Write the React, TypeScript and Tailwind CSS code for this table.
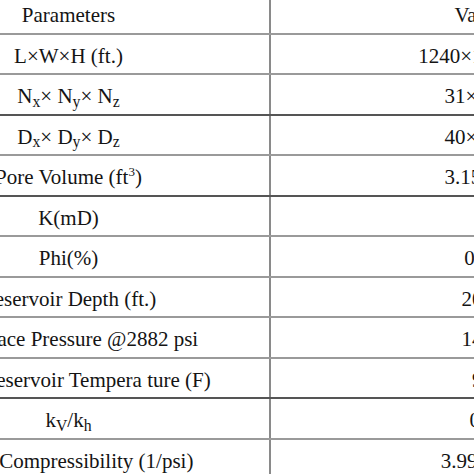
import type { ReactNode } from "react";

type Row = {
  label: ReactNode;
  value: ReactNode;
  dark?: boolean;
  shift?: string;
};

const rows: Row[] = [
  { label: "Parameters", value: "Values" },
  { label: "L×W×H (ft.)", value: "1240×1240×25" },
  {
    label: (
      <>
        N<sub>x</sub>× N<sub>y</sub>× N<sub>z</sub>
      </>
    ),
    value: "31×31×5",
    dark: true,
  },
  {
    label: (
      <>
        D<sub>x</sub>× D<sub>y</sub>× D<sub>z</sub>
      </>
    ),
    value: "40×40×5",
  },
  {
    label: (
      <>
        Pore Volume (ft<sup className="text-[13px] -top-[0.6em]">3</sup>)
      </>
    ),
    value: (
      <>
        3.15×10<sup className="text-[13px] -top-[0.6em]">7</sup>
      </>
    ),
    dark: true,
  },
  { label: "K(mD)", value: "5" },
  { label: "Phi(%)", value: "0.25" },
  { label: "Reservoir Depth (ft.)", value: "2000" },
  { label: "Interface Pressure @2882 psi", value: "1400", shift: "pl-[12px]" },
  { label: "Reservoir Tempera ture (F)", value: "95", dark: true, shift: "pl-[56px]" },
  {
    label: (
      <>
        k<sub>V</sub>/k<sub>h</sub>
      </>
    ),
    value: "0.1",
  },
  {
    label: "Rock Compressibility (1/psi)",
    value: (
      <>
        3.99×10<sup className="text-[13px] -top-[0.6em]">−6</sup>
      </>
    ),
    shift: "pl-[6px]",
  },
];

export default function App() {
  return (
    <div className="w-[474px] h-[474px] overflow-hidden bg-white font-['Liberation_Serif',serif] text-[21px] text-[#141414]">
      <div className="-ml-[132px] -mt-[6px] w-[828px]">
        {rows.map((row, i) => (
          <div
            key={i}
            className={`flex h-[40.5px] border-b-2 ${row.dark ? "border-[#555]" : "border-[#9a9a9a]"}`}
          >
            <div
              className={`w-[403px] shrink-0 flex items-center justify-center pt-[5px] whitespace-pre border-r-2 border-[#8a8a8a] ${row.shift ?? ""}`}
            >
              <span>{row.label}</span>
            </div>
            <div className="w-[423px] shrink-0 flex items-center justify-center pt-[5px] whitespace-pre">
              <span>{row.value}</span>
            </div>
          </div>
        ))}
      </div>
    </div>
  );
}
